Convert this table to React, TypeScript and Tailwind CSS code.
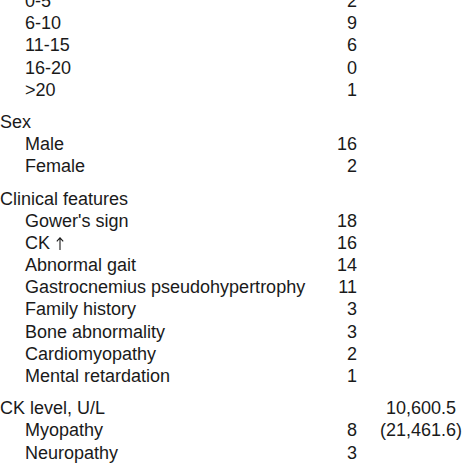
import React from 'react';

interface Row {
  label: React.ReactNode;
  key: string;
  count?: string;
  value?: string;
}

interface Section {
  title?: string;
  value?: string;
  rows: Row[];
}

const UpArrow = () => (
  <svg width="8" height="13" viewBox="0 0 8 13" className="ml-[6px] inline-block align-[-1px]">
    <path d="M4 0.8 V13 M0.8 4.4 L4 0.8 L7.2 4.4" fill="none" stroke="currentColor" strokeWidth="1.1" />
  </svg>
);

const sections: Section[] = [
  {
    rows: [
      { key: '0-5', label: '0-5', count: '2' },
      { key: '6-10', label: '6-10', count: '9' },
      { key: '11-15', label: '11-15', count: '6' },
      { key: '16-20', label: '16-20', count: '0' },
      { key: '>20', label: '>20', count: '1' },
    ],
  },
  {
    title: 'Sex',
    rows: [
      { key: 'male', label: 'Male', count: '16' },
      { key: 'female', label: 'Female', count: '2' },
    ],
  },
  {
    title: 'Clinical features',
    rows: [
      { key: 'gower', label: "Gower's sign", count: '18' },
      { key: 'ck', label: <>CK<UpArrow /></>, count: '16' },
      { key: 'gait', label: 'Abnormal gait', count: '14' },
      { key: 'gastro', label: 'Gastrocnemius pseudohypertrophy', count: '11' },
      { key: 'family', label: 'Family history', count: '3' },
      { key: 'bone', label: 'Bone abnormality', count: '3' },
      { key: 'cardio', label: 'Cardiomyopathy', count: '2' },
      { key: 'mental', label: 'Mental retardation', count: '1' },
    ],
  },
  {
    title: 'CK level, U/L',
    value: '10,600.5',
    rows: [
      { key: 'myo', label: 'Myopathy', count: '8', value: '(21,461.6)' },
      { key: 'neuro', label: 'Neuropathy', count: '3' },
    ],
  },
];

const TableRow: React.FC<{ label: React.ReactNode; count?: string; value?: string; header?: boolean }> = ({
  label,
  count,
  value,
  header,
}) => (
  <div className="flex h-[22.2px] items-center whitespace-nowrap">
    <div className={header ? 'w-[330px] pl-0' : 'w-[330px] pl-[25px]'}>{label}</div>
    <div className="w-[27px] text-right">{count}</div>
    <div className="ml-[13px] w-[102px] text-center">{value}</div>
  </div>
);

export default function App() {
  return (
    <div
      className="h-[474px] w-[474px] overflow-hidden bg-white text-[18px] leading-[22.2px] text-[#1a1a1a]"
      style={{ fontFamily: '"Liberation Sans", Arial, sans-serif' }}
    >
      <div className="-mt-[10px] flex flex-col gap-[10px]">
        {sections.map((s, i) => (
          <div key={i}>
            {s.title && <TableRow header label={s.title} value={s.value} />}
            {s.rows.map((r) => (
              <TableRow key={r.key} label={r.label} count={r.count} value={r.value} />
            ))}
          </div>
        ))}
      </div>
    </div>
  );
}
